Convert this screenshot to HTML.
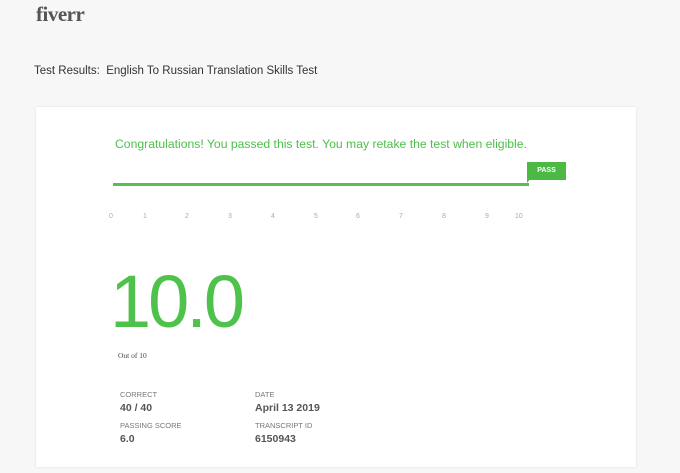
<!DOCTYPE html>
<html><head><style>
body{margin:0;width:680px;height:473px;background:#f7f7f7;font-family:"Liberation Sans",sans-serif;position:relative;overflow:hidden}
.a{position:absolute;white-space:nowrap}
.card{position:absolute;left:36px;top:107px;width:600px;height:360px;background:#fff;box-shadow:0 0 2px rgba(0,0,0,.12)}
.t{font-size:7px;color:#aaa;top:213px}
.l{font-size:7.5px;color:#777}
.v{font-size:10.5px;font-weight:bold;color:#555}
</style></head><body>
<div class="a" style="left:36px;top:2px;font-family:'Liberation Serif',serif;font-weight:bold;font-size:21px;color:#555;letter-spacing:-0.5px">fiverr</div>
<div class="a" style="left:34px;top:65px;font-size:11.5px;color:#333">Test Results:&nbsp; English To Russian Translation Skills Test</div>
<div class="card"></div>
<div class="a" style="left:115px;top:137px;font-size:12.2px;color:#4cc04a">Congratulations! You passed this test. You may retake the test when eligible.</div>
<div class="a" style="left:113px;top:183px;width:416px;height:3px;background:#55c04d"></div>
<div class="a" style="left:527px;top:162px;width:39px;height:18px;background:#4cb944;color:#fff;font-size:7px;font-weight:bold;line-height:18px;text-align:center">PASS</div>
<div class="a" style="left:527px;top:178px;width:0;height:0;border-top:5px solid #4cb944;border-right:4px solid transparent"></div>
<div class="a t" style="left:109px">0</div>
<div class="a t" style="left:143px">1</div>
<div class="a t" style="left:185px">2</div>
<div class="a t" style="left:228px">3</div>
<div class="a t" style="left:271px">4</div>
<div class="a t" style="left:314px">5</div>
<div class="a t" style="left:356px">6</div>
<div class="a t" style="left:399px">7</div>
<div class="a t" style="left:442px">8</div>
<div class="a t" style="left:485px">9</div>
<div class="a t" style="left:515px">10</div>
<div class="a" style="left:110px;top:262px;font-size:74px;color:#4fc24c;letter-spacing:-3px;line-height:80px">10.0</div>
<div class="a" style="left:118px;top:351px;font-family:'Liberation Serif',serif;font-size:7.5px;color:#444">Out of 10</div>
<div class="a l" style="left:120px;top:390px">CORRECT</div>
<div class="a v" style="left:120px;top:402px">40 / 40</div>
<div class="a l" style="left:120px;top:421px">PASSING SCORE</div>
<div class="a v" style="left:120px;top:433px">6.0</div>
<div class="a l" style="left:255px;top:390px">DATE</div>
<div class="a v" style="left:255px;top:402px">April 13 2019</div>
<div class="a l" style="left:255px;top:421px">TRANSCRIPT ID</div>
<div class="a v" style="left:255px;top:433px">6150943</div>
</body></html>
